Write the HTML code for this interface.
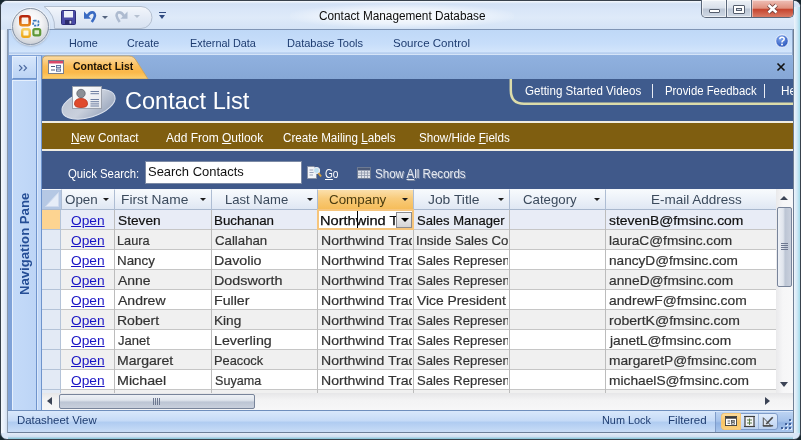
<!DOCTYPE html>
<html><head><meta charset="utf-8">
<style>
*{box-sizing:border-box;margin:0;padding:0}
html,body{width:801px;height:440px;overflow:hidden;background:#16262e}
body{font-family:"Liberation Sans",sans-serif;position:relative}
.abs,.tx{position:absolute}
i{display:block;font-style:normal;position:absolute}
.tx{white-space:nowrap;line-height:1}
.tx>span{display:inline-block;transform-origin:0 0;line-height:1;white-space:nowrap}
#frame{left:0;top:0;width:801px;height:440px;background:#d9e6f7;border-radius:7px 7px 7px 7px;border:1px solid #38424d;overflow:hidden}
#titlebar{left:1px;top:1px;width:799px;height:28px;border-radius:6px 6px 0 0;background:linear-gradient(180deg,#f6f9fd 0%,#d2e1f5 10%,#d9e6f8 30%,#deeaf9 60%,#d4e3f6 100%)}
#glow{left:290px;top:4px;width:224px;height:24px;border-radius:12px;background:radial-gradient(ellipse at center,rgba(255,255,255,.85) 0%,rgba(255,255,255,.5) 45%,rgba(255,255,255,0) 75%)}
#ribbon{left:8px;top:29px;width:785px;height:26px;background:linear-gradient(180deg,#bfd8f7 0%,#c7defa 55%,#d3e5fb 88%,#a9c4ea 92%,#e4effc 100%);border-top:1px solid #7f95b5;border-left:1px solid #8ea6c8;border-right:1px solid #8ea6c8}
#docbar{left:8px;top:55px;width:785px;height:24px;background:linear-gradient(180deg,#90b1df,#86a7d6)}
#navbg{left:8px;top:55px;width:34px;height:355px;background:#7fa2d8}
#hdr{left:42px;top:79px;width:751px;height:43px;background:#3f5b8d}
#brown{left:42px;top:121px;width:751px;height:30px;background:#7f5e10;border-top:2px solid #efece2;border-bottom:2px solid #efece2}
#search{left:42px;top:151px;width:751px;height:38px;background:#40598a}
#grid{left:42px;top:189px;width:751px;height:204px;background:#fff}
#status{left:8px;top:410px;width:785px;height:23px;background:linear-gradient(180deg,#d9e8fb 0%,#c6dbf7 45%,#b0ccf1 55%,#c9ddf7 100%);border-top:1px solid #6f8fbd;border-bottom:1px solid #6d7f99}
</style></head><body>
<div id="frame" class="abs"></div>
<div id="titlebar" class="abs"></div>
<div id="glow" class="abs"></div>
<div id="ribbon" class="abs"></div>
<div id="docbar" class="abs"></div>
<div id="navbg" class="abs"></div>
<div id="hdr" class="abs"></div>
<div id="brown" class="abs"></div>
<div id="search" class="abs"></div>
<div id="grid" class="abs"></div>
<div id="status" class="abs"></div>
<style>
.gh{top:189px;height:21px;background:linear-gradient(180deg,#f7fafd 0%,#edf2f9 45%,#dfe7f3 100%);border-left:1px solid #aebdd3;border-bottom:1px solid #a9b8ce;border-top:1px solid #f4f7fb}
.gh.sel{background:linear-gradient(180deg,#fbe0ac 0%,#f8cb7b 45%,#f6bd5a 100%);border-bottom-color:#d9a040}
.dd{width:0;height:0;border-left:3px solid transparent;border-right:3px solid transparent;border-top:3px solid #1c1c1c;top:198px}
.rw{left:61px;width:715px;height:20px;border-bottom:1px solid #c6c6c6}
.rs{left:42px;width:19px;height:20px;background:#e3eaf5;border-bottom:1px solid #b4c3d8;border-right:1px solid #b4c3d8}
.vl{top:210px;width:1px;height:183px;background:#bcbcbc}
</style>
<i class="gh" style="left:42px;width:19px;background:#b5c8e4;border-left:none"></i>
<svg class="abs" style="left:44px;top:191px" width="16" height="17"><path d="M14.500 1.500V15.500H1.500Z" fill="#e6edf8" stroke="#d0dbee" stroke-width="1"/></svg>
<i class="gh" style="left:61px;width:53px"></i>
<i class="gh" style="left:114px;width:97px"></i>
<i class="gh" style="left:211px;width:106px"></i>
<i class="gh sel" style="left:317px;width:96px"></i>
<i class="gh" style="left:413px;width:96px"></i>
<i class="gh" style="left:509px;width:96px"></i>
<i class="gh" style="left:605px;width:171px"></i>
<i class="dd" style="left:103px"></i><i class="dd" style="left:200px"></i><i class="dd" style="left:307px"></i><i class="dd" style="left:402px"></i><i class="dd" style="left:498px"></i><i class="dd" style="left:594px"></i>
<i class="rw" style="top:210px;background:#e8ecf6"></i><i class="rs" style="top:210px;background:#fdd491"></i>
<i class="rw" style="top:230px;background:#f0f0f0"></i><i class="rs" style="top:230px"></i>
<i class="rw" style="top:250px;background:#fff"></i><i class="rs" style="top:250px"></i>
<i class="rw" style="top:270px;background:#f0f0f0"></i><i class="rs" style="top:270px"></i>
<i class="rw" style="top:290px;background:#fff"></i><i class="rs" style="top:290px"></i>
<i class="rw" style="top:310px;background:#f0f0f0"></i><i class="rs" style="top:310px"></i>
<i class="rw" style="top:330px;background:#fff"></i><i class="rs" style="top:330px"></i>
<i class="rw" style="top:350px;background:#f0f0f0"></i><i class="rs" style="top:350px"></i>
<i class="rw" style="top:370px;background:#fff"></i><i class="rs" style="top:370px"></i>
<i class="rw" style="top:390px;height:3px;border:none;background:#f0f0f0"></i><i class="rs" style="top:390px;height:3px;border-bottom:none"></i>
<i class="vl" style="left:114px"></i><i class="vl" style="left:211px"></i><i class="vl" style="left:317px"></i><i class="vl" style="left:413px"></i><i class="vl" style="left:509px"></i><i class="vl" style="left:605px"></i>
<!-- active cell -->
<i style="left:317px;top:209px;width:97px;height:21px;background:#fff;border:2px solid #f6c57c"></i>
<i style="left:357px;top:211px;width:1px;height:17px;background:#000"></i>
<i style="left:396px;top:212px;width:16px;height:16px;background:linear-gradient(180deg,#f3f3f3,#d4d4d6);border:1px solid #8c8c90"></i>
<i style="left:401px;top:218px;width:0;height:0;border-left:4px solid transparent;border-right:4px solid transparent;border-top:4px solid #000"></i>
<!-- search box -->
<i style="left:145px;top:161px;width:157px;height:23px;background:#fff;border:1px solid #7c8aa5"></i>

<!-- nav pane -->
<i style="left:12px;top:56px;width:25px;height:23px;background:linear-gradient(180deg,#d6e6fb,#bcd4f5);border:1px solid #e6f0fd;border-right-color:#6f94cc;border-bottom-color:#6f94cc"></i>
<i style="left:12px;top:80px;width:25px;height:330px;background:linear-gradient(90deg,#c4daf8,#bdd5f6);border:1px solid #e6f0fd;border-right-color:#6f94cc;border-bottom:none"></i>
<i style="left:37px;top:56px;width:4px;height:354px;background:#c3d9f8;border-left:1px solid #dbe8fb"></i>
<i style="left:41px;top:56px;width:1px;height:354px;background:#6f94cc"></i>
<svg class="abs" style="left:18px;top:64px" width="10" height="8"><path d="M1.2 1.2L4 4L1.2 6.800M5.700 1.2L8.500 4L5.700 6.800" fill="none" stroke="#4a689e" stroke-width="1.200"/></svg>
<!-- doc tab -->
<svg class="abs" style="left:42px;top:55px" width="110" height="24" viewBox="0 0 110 24"><defs><linearGradient id="tg" x1="0" y1="0" x2="0" y2="1"><stop offset="0" stop-color="#fbdca6"/><stop offset=".45" stop-color="#fbbe5a"/><stop offset=".7" stop-color="#fbb748"/><stop offset="1" stop-color="#fdd06e"/></linearGradient></defs><path d="M0.5 24V5Q0.5 1 5 1H87Q92 1 94.5 6L106 24Z" fill="url(#tg)" stroke="#c9a566" stroke-width="1"/></svg>
<svg class="abs" style="left:48px;top:60px" width="16" height="14" viewBox="0 0 16 14"><rect x=".5" y=".5" width="15" height="13" fill="#fff" stroke="#7a7f8c"/><rect x="1" y="1" width="14" height="2.5" fill="#d8486a"/><path d="M3 6.5H7M3 10H7" stroke="#4a5a80" stroke-width="1.2"/><rect x="8.5" y="5.5" width="4" height="2.2" fill="#dfe8f6" stroke="#5a6c9a" stroke-width=".9"/><rect x="8.5" y="9" width="4" height="2.2" fill="#dfe8f6" stroke="#5a6c9a" stroke-width=".9"/></svg>
<!-- doc close X -->
<svg class="abs" style="left:776px;top:62px" width="10" height="10"><path d="M1.5 1.5L8.5 8.5M8.5 1.5L1.5 8.5" stroke="#111" stroke-width="1.6"/></svg>
<!-- header bracket + pipes -->
<svg class="abs" style="left:505px;top:79px" width="289" height="30" viewBox="0 0 289 30"><path d="M5.800 0V11Q5.800 24.800 19 24.800H289" fill="none" stroke="#dcdcaa" stroke-width="2.500"/></svg>
<i style="left:652px;top:84px;width:1px;height:14px;background:#e8ecf4"></i>
<i style="left:764px;top:84px;width:1px;height:14px;background:#e8ecf4"></i>
<!-- header icon -->
<svg class="abs" style="left:58px;top:80px" width="64" height="42" viewBox="0 0 64 42"><defs><linearGradient id="eg" x1="0" y1="0" x2="1" y2="1"><stop offset="0" stop-color="#b9c2d2"/><stop offset=".5" stop-color="#c9d0dc"/><stop offset="1" stop-color="#8f9db6"/></linearGradient><linearGradient id="cg" x1="0" y1="0" x2="1" y2="1"><stop offset="0" stop-color="#fff"/><stop offset="1" stop-color="#e3e6ec"/></linearGradient></defs>
<ellipse cx="30.500" cy="24" rx="27.500" ry="13.200" transform="rotate(-17 31 24)" fill="url(#eg)" stroke="#dbe2ee" stroke-width="1"/>
<rect x="14.500" y="6.500" width="29" height="22" fill="url(#cg)" stroke="#9aa0ac" stroke-width="1"/>
<circle cx="23" cy="13.500" r="4.200" fill="#8b8f96" stroke="#62666e" stroke-width=".8"/>
<path d="M16.500 24Q16.500 18.500 23 18.500Q29.500 18.500 29.500 24Q29.500 27.500 23 27.500Q16.500 27.500 16.500 24Z" fill="#e04a2c" stroke="#b83018" stroke-width=".8"/>
<path d="M32.500 11.500H41M32.500 13.700H41M32.500 19.500H41M32.500 21.700H41M32.500 23.900H41M32.500 26H41" stroke="#6d7ea2" stroke-width="1"/></svg>
<!-- search icons -->
<svg class="abs" style="left:306px;top:165px" width="16" height="15" viewBox="0 0 16 15"><path d="M1.500 1.500H8L10.500 4V13.500H1.500Z" fill="#f2f4f8" stroke="#8a93a6"/><path d="M3.500 5H8M3.500 7.500H8M3.500 10H7" stroke="#98a2b8" stroke-width="1"/><circle cx="10.500" cy="5.500" r="3" fill="#bfe0f2" stroke="#e9ecf2" stroke-width="1.200"/><path d="M12.500 8L15 11.500" stroke="#d8a13a" stroke-width="2"/></svg>
<svg class="abs" style="left:357px;top:167px" width="14" height="12" viewBox="0 0 14 12"><rect x=".5" y=".5" width="13" height="11" fill="#dfe3ea" stroke="#6d7a92"/><rect x="1" y="1" width="12" height="2.500" fill="#4c5a78"/><path d="M1 6H13M1 8.500H13M4.500 3.500V11M7.500 3.500V11M10.500 3.500V11" stroke="#8e98ab" stroke-width=".8"/></svg>

<!-- QAT -->
<svg class="abs" style="left:40px;top:4px" width="116" height="28" viewBox="40 4 116 28"><defs><linearGradient id="qg" x1="0" y1="0" x2="0" y2="1"><stop offset="0" stop-color="#f3f6fb"/><stop offset=".5" stop-color="#e4ebf6"/><stop offset="1" stop-color="#d7e2f1"/></linearGradient></defs><path d="M44 6.500H141A11 11 0 0 1 141 28.500H54.500A24 24 0 0 0 44 6.500Z" fill="url(#qg)" stroke="#b3bfd0" stroke-width="1"/></svg>
<!-- office button -->
<i style="left:12px;top:8px;width:37px;height:37px;border-radius:50%;background:radial-gradient(circle at 50% 38%,#ffffff 0%,#f4f4f5 40%,#d6d9de 70%,#b8bdc6 100%);border:1px solid #8995a6;box-shadow:0 0 0 1px rgba(255,255,255,.6),0 1px 2px rgba(40,50,70,.5)"></i>
<svg class="abs" style="left:18px;top:14px" width="24" height="24" viewBox="18 14 24 24"><defs><linearGradient id="lr" x1="0" y1="0" x2="0" y2="1"><stop offset="0" stop-color="#b5260e"/><stop offset="1" stop-color="#e88a1c"/></linearGradient><linearGradient id="ly" x1="0" y1="0" x2="0" y2="1"><stop offset="0" stop-color="#f6cf62"/><stop offset="1" stop-color="#eea818"/></linearGradient></defs>
<rect x="20.300" y="16.300" width="9.400" height="8.900" rx="2" fill="#fbf3ea" stroke="url(#lr)" stroke-width="2.600"/>
<rect x="33.200" y="20.600" width="5.300" height="5" rx="1.200" fill="#eef4fa" stroke="#3a78bc" stroke-width="1.700" stroke-dasharray="2.200 1.100"/>
<rect x="22.200" y="29.200" width="7.500" height="7.600" rx="1.800" fill="#fdf6e0" stroke="url(#ly)" stroke-width="2.400"/>
<rect x="33.400" y="29.100" width="6.800" height="6.200" rx="1.500" fill="#dfeccf" stroke="#5f9838" stroke-width="2.200"/>
</svg>
<!-- save -->
<svg class="abs" style="left:61px;top:10px" width="15" height="15" viewBox="0 0 15 15"><rect x=".5" y=".5" width="14" height="14" rx="1" fill="#4a4aa6" stroke="#2e2e7a"/><rect x="3" y="1" width="9" height="6.500" fill="#eef0fa"/><rect x="4" y="10" width="7" height="4.500" fill="#2b2b6a"/><rect x="8.500" y="10.800" width="1.800" height="2.800" fill="#dfe3f3"/></svg>
<!-- undo -->
<svg class="abs" style="left:83px;top:10px" width="15" height="14" viewBox="83 10 15 14"><path d="M84 11.500V18.800H91Z" fill="#3a6ac2"/><path d="M87.500 16Q90 11.500 93.500 12.500Q97 15 91.800 22" stroke="#3a6ac2" stroke-width="2.600" fill="none"/></svg>
<i style="left:101.500px;top:15.500px;width:0;height:0;border-left:3px solid transparent;border-right:3px solid transparent;border-top:3px solid #55647f"></i>
<!-- redo (disabled) -->
<svg class="abs" style="left:114px;top:10px" width="15" height="14" viewBox="114 10 15 14"><path d="M127.500 11.500V18.800H120.500Z" fill="#aebbd0"/><path d="M124 16Q121.500 11.500 118 12.500Q114.500 15 119.700 22" stroke="#aebbd0" stroke-width="2.600" fill="none"/></svg>
<i style="left:134px;top:15px;width:0;height:0;border-left:3px solid transparent;border-right:3px solid transparent;border-top:3px solid #b5c0d0"></i>
<!-- qat customize -->
<i style="left:159px;top:12px;width:7px;height:1px;background:#2f4a80"></i>
<i style="left:159px;top:15px;width:0;height:0;border-left:3.500px solid transparent;border-right:3.500px solid transparent;border-top:4px solid #2f4a80"></i>
<!-- window buttons -->
<i style="left:701px;top:0;width:93px;height:18px;border:1px solid #5a6779;border-top:none;border-radius:0 0 5px 5px;overflow:hidden;background:linear-gradient(180deg,#edf1f6 0%,#d9e0ea 47%,#bcc6d5 53%,#d0d9e5 100%)"><i style="left:24px;top:0;width:1px;height:18px;background:#5a6779"></i><i style="left:49px;top:0;width:43px;height:18px;background:linear-gradient(180deg,#efc0b8 0%,#e0917f 45%,#c6452f 53%,#dc826c 100%);border-left:1px solid #5a6779;box-shadow:inset 0 0 0 1px rgba(255,255,255,.45)"></i><i style="left:0;top:0;width:24px;height:17px;box-shadow:inset 0 0 0 1px rgba(255,255,255,.6)"></i><i style="left:25px;top:0;width:24px;height:17px;box-shadow:inset 0 0 0 1px rgba(255,255,255,.6)"></i></i>
<i style="left:709px;top:9px;width:11px;height:4px;background:#fff;border:1px solid #545d6c;border-radius:1px"></i>
<i style="left:733px;top:5px;width:12px;height:9px;background:#fff;border:1px solid #545d6c;border-radius:1px"></i>
<i style="left:736px;top:8px;width:6px;height:3px;background:#d5dce7;border:1px solid #545d6c"></i>
<svg class="abs" style="left:766px;top:3px" width="13" height="11" viewBox="0 0 13 11"><path d="M2.500 2L10.500 9.500M10.500 2L2.500 9.500" stroke="#6a3a36" stroke-width="4.200" stroke-linecap="butt"/><path d="M2.500 2L10.500 9.500M10.500 2L2.500 9.500" stroke="#fff" stroke-width="2.600" stroke-linecap="butt"/></svg>
<!-- help -->
<svg class="abs" style="left:775px;top:34px" width="14" height="14" viewBox="0 0 14 14"><defs><radialGradient id="hg" cx=".4" cy=".3" r=".8"><stop offset="0" stop-color="#7fa6ee"/><stop offset="1" stop-color="#1f4bb4"/></radialGradient></defs><circle cx="7" cy="7" r="6.300" fill="url(#hg)" stroke="#f2f6fd" stroke-width="1"/><path d="M4.800 5.300Q4.800 3.200 7 3.200Q9.200 3.200 9.200 5Q9.200 6.200 7.800 6.900Q7 7.300 7 8.400" fill="none" stroke="#fff" stroke-width="1.500"/><circle cx="7" cy="10.500" r=".95" fill="#fff"/></svg>

<!-- vertical scrollbar -->
<i style="left:776px;top:189px;width:17px;height:204px;background:linear-gradient(90deg,#e9e9eb 0%,#f6f6f7 40%,#f8f8f9 100%)"></i>
<i style="left:777px;top:207px;width:15px;height:80px;border:1px solid #78849a;border-radius:2px;background:linear-gradient(90deg,#eef1f6 0%,#dfe4ec 40%,#bcc5d4 55%,#c9d0dd 100%)"></i>
<i style="left:781px;top:243px;width:7px;height:1px;background:#6d7890;box-shadow:0 2px 0 #6d7890,0 4px 0 #6d7890,0 6px 0 #6d7890"></i>
<i style="left:780px;top:196px;width:0;height:0;border-left:4.500px solid transparent;border-right:4.500px solid transparent;border-bottom:4.500px solid #3c4456"></i>
<i style="left:780px;top:382px;width:0;height:0;border-left:4.500px solid transparent;border-right:4.500px solid transparent;border-top:5px solid #3c4456"></i>
<!-- horizontal scrollbar -->
<i style="left:42px;top:393px;width:751px;height:17px;background:linear-gradient(180deg,#e6e6e8 0%,#f3f3f4 40%,#f7f7f8 100%)"></i>
<i style="left:59px;top:394px;width:196px;height:15px;border:1px solid #78849a;border-radius:2px;background:linear-gradient(180deg,#eef1f6 0%,#dfe4ec 40%,#bcc5d4 55%,#c9d0dd 100%)"></i>
<i style="left:153px;top:398px;width:1px;height:7px;background:#6d7890;box-shadow:2px 0 0 #6d7890,4px 0 0 #6d7890,6px 0 0 #6d7890"></i>
<i style="left:47px;top:397px;width:0;height:0;border-top:4.500px solid transparent;border-bottom:4.500px solid transparent;border-right:5px solid #3c4456"></i>
<i style="left:765px;top:397px;width:0;height:0;border-top:4.500px solid transparent;border-bottom:4.500px solid transparent;border-left:5px solid #3c4456"></i>
<!-- status bar right -->
<i style="left:715px;top:412px;width:1px;height:20px;background:#7f9cc9;box-shadow:1px 0 0 #e4eefc"></i>
<i style="left:716px;top:412px;width:77px;height:20px;background:linear-gradient(180deg,#bcd3f2 0%,#a5c2ea 45%,#8fb1e2 55%,#a9c6ec 100%)"></i>
<i style="left:721px;top:413px;width:57px;height:17px;border:1px solid #7f9cc9;border-radius:3px;background:linear-gradient(180deg,#e1ecfb 0%,#cfe0f7 50%,#bcd2f1 100%)"></i>
<i style="left:721px;top:413px;width:20px;height:17px;border:1px solid #f4c779;border-radius:3px 0 0 3px;background:linear-gradient(180deg,#fcdc9c 0%,#fac461 55%,#fbd07e 100%)"></i>
<i style="left:758px;top:414px;width:1px;height:15px;background:#9db7de"></i>
<svg class="abs" style="left:725px;top:416px" width="12" height="10" viewBox="0 0 14 11" preserveAspectRatio="none"><rect x=".5" y=".5" width="13" height="10" fill="#fff" stroke="#3a3a3a"/><rect x="1" y="1" width="12" height="2" fill="#3a3a3a"/><path d="M3 5.500H6M3 8H6" stroke="#444" stroke-width="1"/><rect x="7.500" y="4.800" width="3.500" height="1.600" fill="none" stroke="#444" stroke-width=".8"/><rect x="7.500" y="7.300" width="3.500" height="1.600" fill="none" stroke="#444" stroke-width=".8"/></svg>
<svg class="abs" style="left:743px;top:415px" width="13" height="13" viewBox="0 0 13 13"><rect x="2" y="1.500" width="9" height="10" fill="#f4f6fa" stroke="#3f3f3f" stroke-width="1.200"/><path d="M1 1.500H12M1 11.500H12" stroke="#3f3f3f" stroke-width="1.200"/><path d="M4 5H9M4 8H9M6.500 3.500V10" stroke="#5d7c4a" stroke-width="1"/></svg>
<svg class="abs" style="left:762px;top:415.500px" width="12" height="11" viewBox="0 0 14 13" preserveAspectRatio="none"><path d="M1.500 12V2L11 12Z" fill="#dfe6f0" stroke="#4a4a4a" stroke-width="1.100"/><path d="M12.500 1.500L5 9.500" stroke="#4a4a4a" stroke-width="2"/><path d="M1 11.500H13" stroke="#4a4a4a" stroke-width="1.500"/></svg>
<i style="left:789px;top:419px;width:2px;height:2px;background:#42619b;box-shadow:0 4px 0 #42619b,0 8px 0 #42619b,-4px 4px 0 #42619b,-4px 8px 0 #42619b,-8px 8px 0 #42619b,1px 1px 0 #dfeafa,1px 5px 0 #dfeafa,1px 9px 0 #dfeafa,-3px 5px 0 #dfeafa,-3px 9px 0 #dfeafa,-7px 9px 0 #dfeafa"></i>
<!-- frame edges -->
<i style="left:1px;top:30px;width:6px;height:403px;background:linear-gradient(90deg,#f4f8fd 0%,#e6eefa 60%,#d2dff0 100%)"></i>
<i style="left:7px;top:29px;width:1px;height:404px;background:#8a99ad"></i>
<i style="left:793px;top:29px;width:1px;height:404px;background:#6f7f95"></i>
<i style="left:794px;top:7px;width:6px;height:426px;background:linear-gradient(90deg,#eef4fb 0%,#d3e8f6 50%,#a3dbea 100%)"></i>
<i style="left:8px;top:433px;width:785px;height:6px;background:linear-gradient(180deg,#e4edf9 0%,#d1e0f2 60%,#7fc1d4 100%)"></i>

<!--PARTS5-->
<div class="tx" style="left:318.75px;top:9.84px;height:15px;font-size:12px;"><span style="color:#0c0c0c;transform:scaleX(0.9823)">Contact Management Database</span></div>
<div class="tx" style="left:68.75px;top:38.19px;height:14px;font-size:11px;"><span style="color:#1e3c70;transform:scaleX(0.9838)">Home</span></div>
<div class="tx" style="left:126.75px;top:38.19px;height:14px;font-size:11px;"><span style="color:#1e3c70;transform:scaleX(0.9727)">Create</span></div>
<div class="tx" style="left:189.50px;top:38.19px;height:14px;font-size:11px;"><span style="color:#1e3c70;transform:scaleX(0.9885)">External Data</span></div>
<div class="tx" style="left:287.00px;top:38.19px;height:14px;font-size:11px;"><span style="color:#1e3c70;transform:scaleX(1.0056)">Database Tools</span></div>
<div class="tx" style="left:393.00px;top:38.19px;height:14px;font-size:11px;"><span style="color:#1e3c70;transform:scaleX(1.0490)">Source Control</span></div>
<div class="tx" style="left:72.50px;top:61.44px;height:14px;font-size:11px;"><span style="color:#1a1208;font-weight:bold;transform:scaleX(0.9469)">Contact List</span></div>
<div class="tx" style="left:124.52px;top:88.98px;height:27px;font-size:24px;"><span style="color:#fff;transform:scaleX(0.9813)">Contact List</span></div>
<div class="tx" style="left:524.75px;top:84.84px;height:15px;font-size:12px;"><span style="color:#fff;transform:scaleX(0.9646)">Getting Started Videos</span></div>
<div class="tx" style="left:664.75px;top:84.84px;height:15px;font-size:12px;"><span style="color:#fff;transform:scaleX(0.9466)">Provide Feedback</span></div>
<div class="tx" style="left:780.50px;top:84.84px;height:15px;font-size:12px;width:12.50px;overflow:hidden;"><span style="color:#fff;transform:scaleX(0.9798)">Help</span></div>
<div class="tx" style="left:70.50px;top:131.84px;height:15px;font-size:12px;"><span style="color:#fff;transform:scaleX(0.9840)"><u>N</u>ew Contact</span></div>
<div class="tx" style="left:165.50px;top:131.84px;height:15px;font-size:12px;"><span style="color:#fff;transform:scaleX(0.9988)">Add From <u>O</u>utlook</span></div>
<div class="tx" style="left:282.50px;top:131.84px;height:15px;font-size:12px;"><span style="color:#fff;transform:scaleX(0.9693)">Create Mailing <u>L</u>abels</span></div>
<div class="tx" style="left:418.75px;top:131.84px;height:15px;font-size:12px;"><span style="color:#fff;transform:scaleX(0.9719)">Show/Hide <u>F</u>ields</span></div>
<div class="tx" style="left:68.00px;top:167.84px;height:15px;font-size:12px;"><span style="color:#fff;transform:scaleX(0.9430)">Quick Search:</span></div>
<div class="tx" style="left:147.50px;top:164.50px;height:16px;font-size:13px;"><span style="color:#111;transform:scaleX(0.9963)">Search Contacts</span></div>
<div class="tx" style="left:325.00px;top:167.84px;height:15px;font-size:12px;"><span style="color:#fff;transform:scaleX(0.8418)"><u>G</u>o</span></div>
<div class="tx" style="left:375.00px;top:167.84px;height:15px;font-size:12px;"><span style="color:#e4e9f2;text-shadow:1px 1px 0 #7d8aa3;transform:scaleX(0.9635)">Show <u>A</u>ll Records</span></div>
<div class="tx" style="left:16.50px;top:415.49px;height:14px;font-size:11px;"><span style="color:#1e3c70;transform:scaleX(1.0364)">Datasheet View</span></div>
<div class="tx" style="left:601.60px;top:415.49px;height:14px;font-size:11px;"><span style="color:#1e3c70;transform:scaleX(0.9877)">Num Lock</span></div>
<div class="tx" style="left:667.50px;top:415.49px;height:14px;font-size:11px;"><span style="color:#1e3c70;transform:scaleX(1.0530)">Filtered</span></div>
<div class="tx" style="left:65.00px;top:192.70px;height:16px;font-size:13px;"><span style="color:#3b4a5c;transform:scaleX(1.0294)">Open</span></div>
<div class="tx" style="left:121.44px;top:192.70px;height:16px;font-size:13px;"><span style="color:#3b4a5c;transform:scaleX(1.0589)">First Name</span></div>
<div class="tx" style="left:224.99px;top:192.70px;height:16px;font-size:13px;"><span style="color:#3b4a5c;transform:scaleX(1.0060)">Last Name</span></div>
<div class="tx" style="left:329.00px;top:192.70px;height:16px;font-size:13px;"><span style="color:#4a3c10;transform:scaleX(1.0296)">Company</span></div>
<div class="tx" style="left:427.50px;top:192.70px;height:16px;font-size:13px;"><span style="color:#3b4a5c;transform:scaleX(1.0636)">Job Title</span></div>
<div class="tx" style="left:523.00px;top:192.70px;height:16px;font-size:13px;"><span style="color:#3b4a5c;transform:scaleX(1.0179)">Category</span></div>
<div class="tx" style="left:650.66px;top:192.70px;height:16px;font-size:13px;"><span style="color:#3b4a5c;transform:scaleX(1.0384)">E-mail Address</span></div>
<div class="tx" style="left:71.10px;top:213.80px;height:16px;font-size:13px;"><span style="color:#1a14c4;transform:scaleX(1.0579)"><u>Open</u></span></div>
<div class="tx" style="left:118.00px;top:213.80px;height:16px;font-size:13px;"><span style="color:#101010;-webkit-text-stroke:.2px #101010;transform:scaleX(1.0536)">Steven</span></div>
<div class="tx" style="left:214.28px;top:213.80px;height:16px;font-size:13px;"><span style="color:#101010;-webkit-text-stroke:.2px #101010;transform:scaleX(1.0241)">Buchanan</span></div>
<div class="tx" style="left:320.48px;top:213.80px;height:16px;font-size:13px;width:75.52px;overflow:hidden;"><span style="color:#0a0a0a;-webkit-text-stroke:.25px #0a0a0a;transform:scaleX(1.1224)">Northwind T</span></div>
<div class="tx" style="left:417.20px;top:213.80px;height:16px;font-size:13px;"><span style="color:#101010;-webkit-text-stroke:.2px #101010;transform:scaleX(1.0022)">Sales Manager</span></div>
<div class="tx" style="left:609.20px;top:213.80px;height:16px;font-size:13px;"><span style="color:#101010;-webkit-text-stroke:.2px #101010;transform:scaleX(1.0674)">stevenB@fmsinc.com</span></div>
<div class="tx" style="left:71.10px;top:233.80px;height:16px;font-size:13px;"><span style="color:#1a14c4;transform:scaleX(1.0579)"><u>Open</u></span></div>
<div class="tx" style="left:117.02px;top:233.80px;height:16px;font-size:13px;"><span style="color:#333;-webkit-text-stroke:.2px #333;transform:scaleX(0.9782)">Laura</span></div>
<div class="tx" style="left:215.30px;top:233.80px;height:16px;font-size:13px;"><span style="color:#333;-webkit-text-stroke:.2px #333;transform:scaleX(1.0179)">Callahan</span></div>
<div class="tx" style="left:320.72px;top:233.80px;height:16px;font-size:13px;width:91.78px;overflow:hidden;"><span style="color:#333;-webkit-text-stroke:.2px #333;transform:scaleX(1.0826)">Northwind Traders</span></div>
<div class="tx" style="left:416.18px;top:233.80px;height:16px;font-size:13px;width:92.32px;overflow:hidden;"><span style="color:#333;-webkit-text-stroke:.2px #333;transform:scaleX(1.0153)">Inside Sales Coordinator</span></div>
<div class="tx" style="left:609.20px;top:233.80px;height:16px;font-size:13px;"><span style="color:#333;-webkit-text-stroke:.2px #333;transform:scaleX(1.0507)">lauraC@fmsinc.com</span></div>
<div class="tx" style="left:71.10px;top:253.80px;height:16px;font-size:13px;"><span style="color:#1a14c4;transform:scaleX(1.0579)"><u>Open</u></span></div>
<div class="tx" style="left:116.97px;top:253.80px;height:16px;font-size:13px;"><span style="color:#333;-webkit-text-stroke:.2px #333;transform:scaleX(1.0289)">Nancy</span></div>
<div class="tx" style="left:214.20px;top:253.80px;height:16px;font-size:13px;"><span style="color:#333;-webkit-text-stroke:.2px #333;transform:scaleX(1.0967)">Davolio</span></div>
<div class="tx" style="left:320.72px;top:253.80px;height:16px;font-size:13px;width:91.78px;overflow:hidden;"><span style="color:#333;-webkit-text-stroke:.2px #333;transform:scaleX(1.0826)">Northwind Traders</span></div>
<div class="tx" style="left:417.20px;top:253.80px;height:16px;font-size:13px;width:91.30px;overflow:hidden;"><span style="color:#333;-webkit-text-stroke:.2px #333;transform:scaleX(1.0037)">Sales Representative</span></div>
<div class="tx" style="left:609.20px;top:253.80px;height:16px;font-size:13px;"><span style="color:#333;-webkit-text-stroke:.2px #333;transform:scaleX(1.0485)">nancyD@fmsinc.com</span></div>
<div class="tx" style="left:71.10px;top:273.80px;height:16px;font-size:13px;"><span style="color:#1a14c4;transform:scaleX(1.0579)"><u>Open</u></span></div>
<div class="tx" style="left:118.00px;top:273.80px;height:16px;font-size:13px;"><span style="color:#333;-webkit-text-stroke:.2px #333;transform:scaleX(1.0720)">Anne</span></div>
<div class="tx" style="left:214.20px;top:273.80px;height:16px;font-size:13px;"><span style="color:#333;-webkit-text-stroke:.2px #333;transform:scaleX(1.1017)">Dodsworth</span></div>
<div class="tx" style="left:320.72px;top:273.80px;height:16px;font-size:13px;width:91.78px;overflow:hidden;"><span style="color:#333;-webkit-text-stroke:.2px #333;transform:scaleX(1.0826)">Northwind Traders</span></div>
<div class="tx" style="left:417.20px;top:273.80px;height:16px;font-size:13px;width:91.30px;overflow:hidden;"><span style="color:#333;-webkit-text-stroke:.2px #333;transform:scaleX(1.0037)">Sales Representative</span></div>
<div class="tx" style="left:609.20px;top:273.80px;height:16px;font-size:13px;"><span style="color:#333;-webkit-text-stroke:.2px #333;transform:scaleX(1.0592)">anneD@fmsinc.com</span></div>
<div class="tx" style="left:71.10px;top:293.80px;height:16px;font-size:13px;"><span style="color:#1a14c4;transform:scaleX(1.0579)"><u>Open</u></span></div>
<div class="tx" style="left:118.00px;top:293.80px;height:16px;font-size:13px;"><span style="color:#333;-webkit-text-stroke:.2px #333;transform:scaleX(1.0785)">Andrew</span></div>
<div class="tx" style="left:214.21px;top:293.80px;height:16px;font-size:13px;"><span style="color:#333;-webkit-text-stroke:.2px #333;transform:scaleX(1.0908)">Fuller</span></div>
<div class="tx" style="left:320.72px;top:293.80px;height:16px;font-size:13px;width:91.78px;overflow:hidden;"><span style="color:#333;-webkit-text-stroke:.2px #333;transform:scaleX(1.0826)">Northwind Traders</span></div>
<div class="tx" style="left:417.20px;top:293.80px;height:16px;font-size:13px;"><span style="color:#333;-webkit-text-stroke:.2px #333;transform:scaleX(1.0634)">Vice President</span></div>
<div class="tx" style="left:609.20px;top:293.80px;height:16px;font-size:13px;"><span style="color:#333;-webkit-text-stroke:.2px #333;transform:scaleX(1.0631)">andrewF@fmsinc.com</span></div>
<div class="tx" style="left:71.10px;top:313.80px;height:16px;font-size:13px;"><span style="color:#1a14c4;transform:scaleX(1.0579)"><u>Open</u></span></div>
<div class="tx" style="left:116.92px;top:313.80px;height:16px;font-size:13px;"><span style="color:#333;-webkit-text-stroke:.2px #333;transform:scaleX(1.0779)">Robert</span></div>
<div class="tx" style="left:214.25px;top:313.80px;height:16px;font-size:13px;"><span style="color:#333;-webkit-text-stroke:.2px #333;transform:scaleX(1.0488)">King</span></div>
<div class="tx" style="left:320.72px;top:313.80px;height:16px;font-size:13px;width:91.78px;overflow:hidden;"><span style="color:#333;-webkit-text-stroke:.2px #333;transform:scaleX(1.0826)">Northwind Traders</span></div>
<div class="tx" style="left:417.20px;top:313.80px;height:16px;font-size:13px;width:91.30px;overflow:hidden;"><span style="color:#333;-webkit-text-stroke:.2px #333;transform:scaleX(1.0037)">Sales Representative</span></div>
<div class="tx" style="left:609.20px;top:313.80px;height:16px;font-size:13px;"><span style="color:#333;-webkit-text-stroke:.2px #333;transform:scaleX(1.0776)">robertK@fmsinc.com</span></div>
<div class="tx" style="left:71.10px;top:333.80px;height:16px;font-size:13px;"><span style="color:#1a14c4;transform:scaleX(1.0579)"><u>Open</u></span></div>
<div class="tx" style="left:118.00px;top:333.80px;height:16px;font-size:13px;"><span style="color:#333;-webkit-text-stroke:.2px #333;transform:scaleX(1.0034)">Janet</span></div>
<div class="tx" style="left:214.21px;top:333.80px;height:16px;font-size:13px;"><span style="color:#333;-webkit-text-stroke:.2px #333;transform:scaleX(1.0946)">Leverling</span></div>
<div class="tx" style="left:320.72px;top:333.80px;height:16px;font-size:13px;width:91.78px;overflow:hidden;"><span style="color:#333;-webkit-text-stroke:.2px #333;transform:scaleX(1.0826)">Northwind Traders</span></div>
<div class="tx" style="left:417.20px;top:333.80px;height:16px;font-size:13px;width:91.30px;overflow:hidden;"><span style="color:#333;-webkit-text-stroke:.2px #333;transform:scaleX(1.0037)">Sales Representative</span></div>
<div class="tx" style="left:610.26px;top:333.80px;height:16px;font-size:13px;"><span style="color:#333;-webkit-text-stroke:.2px #333;transform:scaleX(1.0592)">janetL@fmsinc.com</span></div>
<div class="tx" style="left:71.10px;top:353.80px;height:16px;font-size:13px;"><span style="color:#1a14c4;transform:scaleX(1.0579)"><u>Open</u></span></div>
<div class="tx" style="left:116.92px;top:353.80px;height:16px;font-size:13px;"><span style="color:#333;-webkit-text-stroke:.2px #333;transform:scaleX(1.0816)">Margaret</span></div>
<div class="tx" style="left:214.31px;top:353.80px;height:16px;font-size:13px;"><span style="color:#333;-webkit-text-stroke:.2px #333;transform:scaleX(0.9866)">Peacock</span></div>
<div class="tx" style="left:320.72px;top:353.80px;height:16px;font-size:13px;width:91.78px;overflow:hidden;"><span style="color:#333;-webkit-text-stroke:.2px #333;transform:scaleX(1.0826)">Northwind Traders</span></div>
<div class="tx" style="left:417.20px;top:353.80px;height:16px;font-size:13px;width:91.30px;overflow:hidden;"><span style="color:#333;-webkit-text-stroke:.2px #333;transform:scaleX(1.0037)">Sales Representative</span></div>
<div class="tx" style="left:609.20px;top:353.80px;height:16px;font-size:13px;"><span style="color:#333;-webkit-text-stroke:.2px #333;transform:scaleX(1.0585)">margaretP@fmsinc.com</span></div>
<div class="tx" style="left:71.10px;top:373.80px;height:16px;font-size:13px;"><span style="color:#1a14c4;transform:scaleX(1.0579)"><u>Open</u></span></div>
<div class="tx" style="left:116.90px;top:373.80px;height:16px;font-size:13px;"><span style="color:#333;-webkit-text-stroke:.2px #333;transform:scaleX(1.0978)">Michael</span></div>
<div class="tx" style="left:215.30px;top:373.80px;height:16px;font-size:13px;"><span style="color:#333;-webkit-text-stroke:.2px #333;transform:scaleX(0.9678)">Suyama</span></div>
<div class="tx" style="left:320.72px;top:373.80px;height:16px;font-size:13px;width:91.78px;overflow:hidden;"><span style="color:#333;-webkit-text-stroke:.2px #333;transform:scaleX(1.0826)">Northwind Traders</span></div>
<div class="tx" style="left:417.20px;top:373.80px;height:16px;font-size:13px;width:91.30px;overflow:hidden;"><span style="color:#333;-webkit-text-stroke:.2px #333;transform:scaleX(1.0037)">Sales Representative</span></div>
<div class="tx" style="left:609.20px;top:373.80px;height:16px;font-size:13px;"><span style="color:#333;-webkit-text-stroke:.2px #333;transform:scaleX(1.0580)">michaelS@fmsinc.com</span></div>
<div class="tx" style="left:17.50px;top:295.40px;height:16px;font-size:13px;transform-origin:0 0;transform:rotate(-90deg);"><span style="color:#254e96;font-weight:bold;transform:scaleX(1.0108)">Navigation Pane</span></div>
</body></html>
